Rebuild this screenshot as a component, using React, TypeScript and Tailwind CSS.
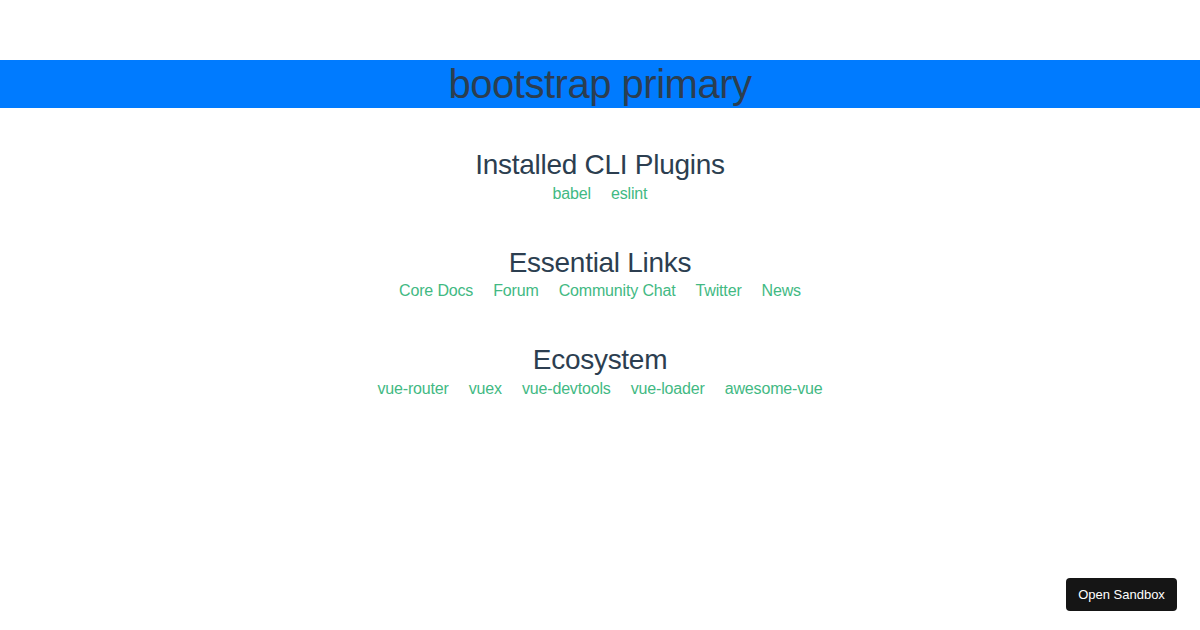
export default function App() {
  const sections = [
    { title: "Installed CLI Plugins", links: ["babel", "eslint"] },
    { title: "Essential Links", links: ["Core Docs", "Forum", "Community Chat", "Twitter", "News"] },
    { title: "Ecosystem", links: ["vue-router", "vuex", "vue-devtools", "vue-loader", "awesome-vue"] },
  ];
  return (
    <div className="min-h-[630px] bg-white pt-[60px] text-center text-[#2c3e50] antialiased" style={{ fontFamily: '"Liberation Sans", Arial, sans-serif' }}>
      <h1 className="m-0 bg-[#007bff] text-[40px] font-medium leading-[48px] tracking-[-0.012em]">bootstrap primary</h1>
      <div>
        {sections.map((s) => (
          <div key={s.title}>
            <h3 className="mt-[40px] text-[28px] font-medium leading-[33.6px] tracking-[-0.01em]">{s.title}</h3>
            <ul className="m-0 mb-4 list-none p-0 text-base leading-6 tracking-[-0.01em]">
              {s.links.map((l) => (
                <li key={l} className="mx-[10px] inline-block">
                  <a className="text-[#42b983]" href="#">{l}</a>
                </li>
              ))}
            </ul>
          </div>
        ))}
      </div>
      <button className="fixed bottom-[19px] right-[23px] h-[33px] w-[111px] rounded-[4px] bg-[#151515] text-[13px] text-white">Open Sandbox</button>
    </div>
  );
}
